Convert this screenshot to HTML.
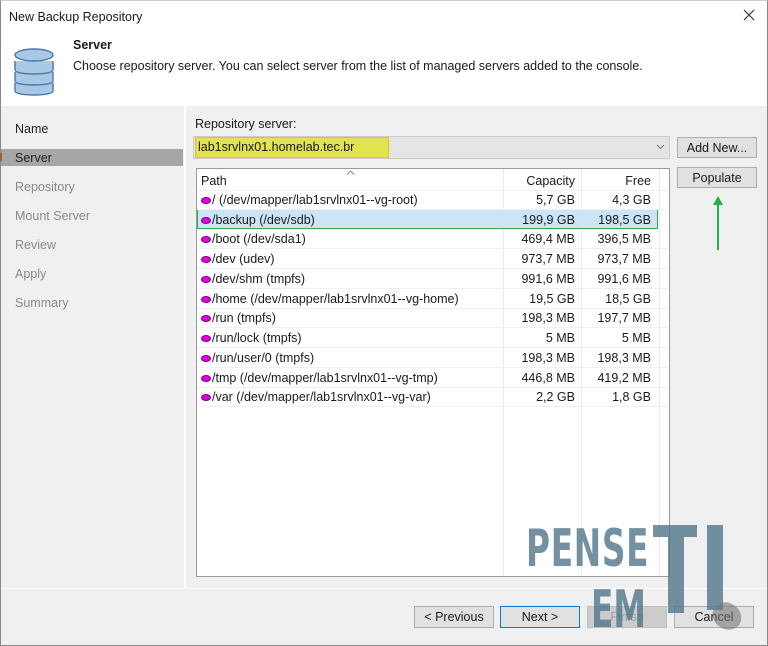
<!DOCTYPE html>
<html><head><style>
*{margin:0;padding:0;box-sizing:border-box}
body{width:768px;height:646px;overflow:hidden;background:#fff;font-family:"Segoe UI","Liberation Sans",sans-serif;font-size:12.5px;color:#1a1a1a;position:relative}
.a{position:absolute}
.win{left:0;top:0;width:768px;height:646px;border:1px solid #8a8a8a;border-top:1px solid #ccc}
.body{left:1px;top:106px;width:766px;height:539px;background:#f0f0f0}
.nav{left:15px;font-size:12.5px;color:#8a8a8a}
.btn{background:#e1e1e1;border:1px solid #adadad;text-align:center;line-height:20px;font-size:12.5px}
.row{position:absolute;left:197px;width:471px;height:20px;border-bottom:1px solid #eef0f3;font-size:12.5px;line-height:21px}
.row .p{position:absolute;left:4px}
.row .c{position:absolute;right:93px}
.row .f{position:absolute;right:17px}
.row .d{display:inline-block;width:10px;height:7px;background:#e000e0;border-radius:50%;border:1px solid #800080;margin-right:1px;vertical-align:0px}
.wm{font-family:"DejaVu Sans Condensed","DejaVu Sans",sans-serif;font-weight:bold;color:rgba(80,118,138,0.8);transform-origin:0 0}
</style></head><body>
<div class="a win"></div>
<div class="a" style="left:9px;top:10px;font-size:12.5px">New Backup Repository</div>
<svg class="a" style="left:743px;top:9px" width="12" height="12"><path d="M1 1L11 11M11 1L1 11" stroke="#333" stroke-width="1.2"/></svg>
<svg class="a" style="left:13px;top:46px" width="42" height="50" viewBox="0 0 42 50">
<g fill="#a9c8e6" stroke="#4a78a8" stroke-width="1.4">
<path d="M2 37v8c0 2.5 8.5 4 19 4s19-1.5 19-4v-8"/>
<path d="M2 26v9c0 2.5 8.5 4 19 4s19-1.5 19-4v-9"/>
<path d="M2 15v9c0 2.5 8.5 4 19 4s19-1.5 19-4v-9"/>
<ellipse cx="21" cy="9" rx="19" ry="6"/>
</g></svg>
<div class="a" style="left:73px;top:38px;font-weight:bold;font-size:12.5px">Server</div>
<div class="a" style="left:73px;top:59px">Choose repository server. You can select server from the list of managed servers added to the console.</div>
<div class="a body"></div>
<div class="a" style="left:184px;top:106px;width:2px;height:482px;background:#fff"></div>
<div class="a" style="left:1px;top:149px;width:182px;height:17px;background:#a6a6a6"></div>
<div class="a" style="left:0;top:153px;width:2px;height:8px;background:#a06030"></div>
<div class="a nav" style="top:122px;color:#222">Name</div>
<div class="a nav" style="top:151px;color:#222">Server</div>
<div class="a nav" style="top:180px">Repository</div>
<div class="a nav" style="top:209px">Mount Server</div>
<div class="a nav" style="top:238px">Review</div>
<div class="a nav" style="top:267px">Apply</div>
<div class="a nav" style="top:296px">Summary</div>
<div class="a" style="left:195px;top:117px">Repository server:</div>
<div class="a" style="left:193px;top:136px;width:477px;height:23px;background:#e5e5e5;border:1px solid #ccc"></div>
<div class="a" style="left:195px;top:137px;width:194px;height:21px;background:#e2e34f;border:1px solid #d8c820"></div>
<div class="a" style="left:198px;top:140px">lab1srvlnx01.homelab.tec.br</div>
<svg class="a" style="left:656px;top:144px" width="9" height="6"><path d="M1 1L4.5 4.5L8 1" stroke="#777" fill="none"/></svg>
<div class="a btn" style="left:677px;top:137px;width:80px;height:21px">Add New...</div>
<div class="a btn" style="left:677px;top:167px;width:80px;height:21px">Populate</div>
<div class="a" style="left:717px;top:202px;width:2px;height:48px;background:#22b04a"></div>
<div class="a" style="left:713px;top:196px;width:0;height:0;border-left:5px solid transparent;border-right:5px solid transparent;border-bottom:9px solid #22b04a"></div>
<div class="a" style="left:196px;top:168px;width:474px;height:409px;background:#fff;border:1px solid #9a9a9a"></div>
<div class="a" style="left:503px;top:169px;width:1px;height:407px;background:#e8ecf0"></div>
<div class="a" style="left:581px;top:169px;width:1px;height:407px;background:#e8ecf0"></div>
<div class="a" style="left:659px;top:169px;width:1px;height:407px;background:#e8ecf0"></div>
<svg class="a" style="left:346px;top:170px" width="9" height="5"><path d="M1 4.5L4.5 1L8 4.5" stroke="#888" fill="none"/></svg>
<div class="row" style="top:171px"><span class="p">Path</span><span class="c">Capacity</span><span class="f">Free</span></div>
<div class="a" style="left:197px;top:209px;width:461px;height:20px;background:#cce4f7;border:1.5px solid #2eaa4a"></div>
<div class="row" style="top:190px"><span class="p"><i class="d"></i>/ (/dev/mapper/lab1srvlnx01--vg-root)</span><span class="c">5,7 GB</span><span class="f">4,3 GB</span></div>
<div class="row" style="top:210px;border:none"><span class="p"><i class="d"></i>/backup (/dev/sdb)</span><span class="c">199,9 GB</span><span class="f">198,5 GB</span></div>
<div class="row" style="top:229px"><span class="p"><i class="d"></i>/boot (/dev/sda1)</span><span class="c">469,4 MB</span><span class="f">396,5 MB</span></div>
<div class="row" style="top:249px"><span class="p"><i class="d"></i>/dev (udev)</span><span class="c">973,7 MB</span><span class="f">973,7 MB</span></div>
<div class="row" style="top:269px"><span class="p"><i class="d"></i>/dev/shm (tmpfs)</span><span class="c">991,6 MB</span><span class="f">991,6 MB</span></div>
<div class="row" style="top:289px"><span class="p"><i class="d"></i>/home (/dev/mapper/lab1srvlnx01--vg-home)</span><span class="c">19,5 GB</span><span class="f">18,5 GB</span></div>
<div class="row" style="top:308px"><span class="p"><i class="d"></i>/run (tmpfs)</span><span class="c">198,3 MB</span><span class="f">197,7 MB</span></div>
<div class="row" style="top:328px"><span class="p"><i class="d"></i>/run/lock (tmpfs)</span><span class="c">5 MB</span><span class="f">5 MB</span></div>
<div class="row" style="top:348px"><span class="p"><i class="d"></i>/run/user/0 (tmpfs)</span><span class="c">198,3 MB</span><span class="f">198,3 MB</span></div>
<div class="row" style="top:368px"><span class="p"><i class="d"></i>/tmp (/dev/mapper/lab1srvlnx01--vg-tmp)</span><span class="c">446,8 MB</span><span class="f">419,2 MB</span></div>
<div class="row" style="top:387px"><span class="p"><i class="d"></i>/var (/dev/mapper/lab1srvlnx01--vg-var)</span><span class="c">2,2 GB</span><span class="f">1,8 GB</span></div>
<div class="a" style="left:1px;top:588px;width:766px;height:1px;background:#fff"></div>
<div class="a btn" style="left:414px;top:606px;width:80px;height:22px">&lt; Previous</div>
<div class="a btn" style="left:500px;top:606px;width:80px;height:22px;border:1px solid #0078d7">Next &gt;</div>
<div class="a btn" style="left:587px;top:606px;width:80px;height:22px;color:#a0a0a0;background:#ccc;border-color:#bfbfbf">Finish</div>
<div class="a btn" style="left:674px;top:606px;width:80px;height:22px">Cancel</div>
<div class="a wm" style="left:526px;top:519px;font-size:52px;transform:scaleX(0.7);letter-spacing:1px">PENSE</div>
<div class="a wm" style="left:591px;top:580px;font-size:52px;transform:scaleX(0.7)">EM</div>
<div class="a" style="left:653px;top:525px;width:44px;height:12px;background:rgba(80,118,138,0.8)"></div>
<div class="a" style="left:668px;top:537px;width:16px;height:76px;background:rgba(80,118,138,0.8)"></div>
<div class="a" style="left:707px;top:525px;width:16px;height:85px;background:rgba(80,118,138,0.8)"></div>
<div class="a" style="left:712px;top:603px;width:30px;height:26px;border-radius:50%;background:rgba(120,120,120,0.6);transform:rotate(35deg)"></div>
</body></html>
